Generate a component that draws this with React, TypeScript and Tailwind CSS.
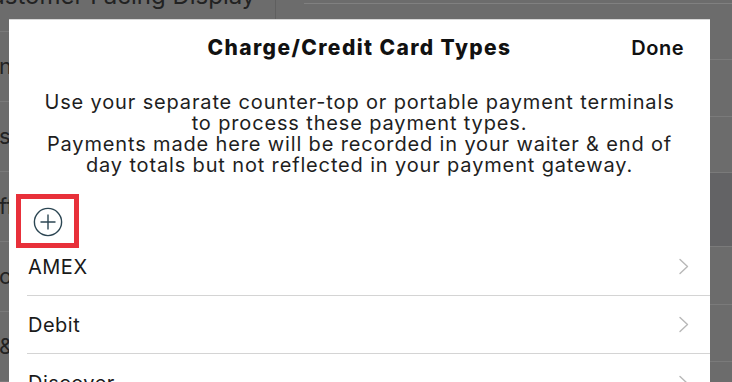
import React from "react";

const font = { fontFamily: '"Inter", "Liberation Sans", sans-serif' };

function Chevron() {
  return (
    <svg width="12" height="17" viewBox="0 0 12 17" fill="none">
      <path d="M2 1.5 L9.5 8.5 L2 15.5" stroke="#b8b8b8" strokeWidth="1.4" strokeLinecap="round" strokeLinejoin="round" />
    </svg>
  );
}

function PlusCircle() {
  return (
    <svg width="30" height="30" viewBox="0 0 30 30" fill="none">
      <circle cx="15" cy="15" r="13.6" stroke="#2c4653" strokeWidth="1.4" />
      <path d="M15 7.5 V22.5 M7.5 15 H22.5" stroke="#2c4653" strokeWidth="1.4" />
    </svg>
  );
}

export default function App() {
  const leftRows = ["nt", "sl", "ff", "or", "&"];
  const items = ["AMEX", "Debit", "Discover"];
  return (
    <div className="relative w-[732px] h-[382px] overflow-hidden bg-[#6c6c6c] text-[#1c1c1c]" style={font}>
      {/* background split view */}
      <div className="flex h-full">
        <div className="w-[276px] border-r border-[#5f5f5f] flex flex-col">
          <div className="h-[32px] border-b border-[#7a7a7a] overflow-hidden">
            <div className="-mt-[18px] -ml-[27px] text-[24px] leading-[28px] whitespace-nowrap text-[#222]">Customer Facing Display</div>
          </div>
          {leftRows.map((t) => (
            <div key={t} className="h-[71px] border-b border-[#7a7a7a] flex items-center text-[22px] text-[#222] -ml-[1px]">
              {t}
            </div>
          ))}
        </div>
        <div className="flex-1 flex flex-col">
          <div className="h-[20px] mt-[3px] ml-[28px] border-t border-[#808080]" />
          <div className="h-[37px] border-b border-[#7a7a7a]" />
          <div className="h-[57px] border-b border-[#7a7a7a]" />
          <div className="h-[56px] border-b border-[#7a7a7a]" />
          <div className="h-[74px] border-b border-[#7a7a7a] bg-[#636365]" />
          <div className="h-[58px] border-b border-[#7a7a7a]" />
          <div className="h-[57px] border-b border-[#7a7a7a]" />
        </div>
      </div>

      {/* modal */}
      <div className="absolute left-[9px] top-[19px] w-[701px] h-[380px] bg-white border-t border-[#d8d8d8]">
        <div className="relative h-[56px] flex items-center justify-center">
          <div className="text-[21px] font-extrabold tracking-[1.4px] text-[#111]">Charge/Credit Card Types</div>
          <div className="absolute right-[26px] top-0 h-full flex items-center text-[20px] font-semibold tracking-[0.5px] text-[#111]">Done</div>
        </div>
        <div className="mt-[16px] text-center text-[20px] leading-[21px] tracking-[0.85px] text-[#1e1e1e]">
          <div>Use your separate counter-top or portable payment terminals</div>
          <div>to process these payment types.</div>
          <div>Payments made here will be recorded in your waiter &amp; end of</div>
          <div>day totals but not reflected in your payment gateway.</div>
        </div>
        <div className="mt-[31px] ml-[24px] h-[31px]">
          <PlusCircle />
        </div>
        <div className="ml-[18px]">
          {items.map((t, i) => (
            <div key={t} className={`h-[58px] flex items-center justify-between pr-[20px] ${i < 2 ? "border-b border-[#d4d4d4]" : ""}`}>
              <span className="pl-[1px] text-[20px] tracking-[0.5px] text-[#1a1a1a]">{t}</span>
              <Chevron />
            </div>
          ))}
        </div>
      </div>

      {/* annotation */}
      <div className="absolute left-[16px] top-[194px] w-[63px] h-[54px] border-[5px] border-[#e8303a]" />
    </div>
  );
}
